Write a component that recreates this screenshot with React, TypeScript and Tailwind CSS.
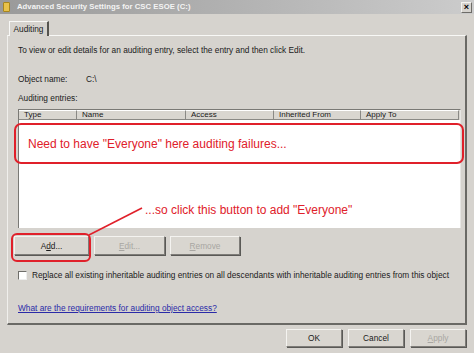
import React from "react";

const ui = { fontFamily: '"Liberation Sans", Arial, sans-serif' };

function Btn({ label, disabled, w, h = "h-[19px]" }: { label: React.ReactNode; disabled?: boolean; w: string; h?: string }) {
  return (
    <div
      className={`${w} ${h} flex items-center justify-center bg-[#d9d6d0] border border-t-[#f4f3f0] border-l-[#f4f3f0] border-r-[#7e7c78] border-b-[#7e7c78] shadow-[1px_1px_0_#5a5956] text-[8.3px] leading-[10px] ${disabled ? "text-[#a8a6a2]" : "text-[#1a1a1a]"}`}
    >
      {label}
    </div>
  );
}

export default function App() {
  return (
    <div className="relative w-[474px] h-[353px] bg-[#d6d3ce] overflow-hidden text-[#1a1a1a]" style={ui}>
      {/* title bar */}
      <div className="h-[14px] flex items-center bg-gradient-to-r from-[#9a9a9a] via-[#b2b2b2] to-[#cccccc]">
        <div className="ml-[3px] w-[7px] h-[10px] bg-[#e8c24a] border border-[#a8861e] rounded-[1px]" />
        <div className="ml-[7px] text-[7.7px] leading-[10px] font-bold text-[#f4f4f4] tracking-[0.05px]">
          Advanced Security Settings for CSC ESOE (C:)
        </div>
        <div className="ml-auto mr-[2px] w-[11px] h-[11px] flex items-center justify-center bg-[#d6d3ce] border border-t-[#f4f3f0] border-l-[#f4f3f0] border-r-[#6e6c68] border-b-[#6e6c68] text-[9px] font-bold leading-none text-black">
          ×
        </div>
      </div>

      <div className="pl-[7px] pr-[7px] pt-[7px]">
        {/* tab */}
        <div className="flex">
          <div className="ml-[2px] w-[40px] h-[15px] flex items-center justify-center text-[8.3px] leading-[10px] bg-[#d6d3ce] border-l border-t border-[#f8f8f6] border-r-2 border-r-[#55544f] relative z-10 -mb-px">
            Auditing
          </div>
        </div>

        {/* panel */}
        <div className="h-[290px] w-[460px] border-t border-l border-t-[#f8f8f6] border-l-[#f0efec] border-r-2 border-r-[#6a6965] border-b-2 border-b-[#6a6965] pl-[10px] pr-[6px] relative text-[8.3px] leading-[10px]">
          <div className="mt-[9px]">
            To view or edit details for an auditing entry, select the entry and then click Edit.
          </div>
          <div className="mt-[19px] flex">
            <span className="w-[68px]">Object name:</span>
            <span>C:\</span>
          </div>
          <div className="mt-[9px]">Auditing entries:</div>

          {/* list */}
          <div className="mt-[6px] w-[443px] border-l border-t border-[#7a7975] border-r border-r-[#e8e7e4] bg-white">
            <div className="h-[10px] flex text-[8px] bg-[#d9d6d0] leading-none">
              {[
                ["Type", "w-[58px]"],
                ["Name", "w-[109px]"],
                ["Access", "w-[88px]"],
                ["Inherited From", "w-[87px]"],
                ["Apply To", "w-[98px]"],
              ].map(([t, w]) => (
                <div key={t} className={`${w} flex items-center pl-[5px] border-r border-r-[#8a8985] border-b border-b-[#8a8985] border-t border-t-white`}>
                  {t}
                </div>
              ))}
            </div>
            <div className="h-[108px]" />
          </div>

          {/* buttons */}
          <div className="mt-[8px] -ml-[4px] flex gap-[5px]">
            <Btn w="w-[75px]" label={<span>A<u>d</u>d...</span>} />
            <Btn w="w-[71px]" disabled label={<span><u>E</u>dit...</span>} />
            <Btn w="w-[70px]" disabled label={<span><u>R</u>emove</span>} />
          </div>

          {/* checkbox */}
          <div className="mt-[15px] flex items-center whitespace-nowrap">
            <div className="w-[9px] h-[9px] shrink-0 bg-white border border-t-[#6f6e6a] border-l-[#6f6e6a] border-r-[#eeeeee] border-b-[#eeeeee]" />
            <span className="ml-[5px]">
              Re<u>p</u>lace all existing inheritable auditing entries on all descendants with inheritable auditing entries from this object
            </span>
          </div>

          <div className="mt-[23px] text-[#2a2aa8] underline">
            What are the requirements for auditing object access?
          </div>
        </div>

        {/* bottom buttons */}
        <div className="mt-[4px] flex justify-end gap-[6px] pr-[1px]">
          <Btn w="w-[56px]" h="h-[18px]" label="OK" />
          <Btn w="w-[56px]" h="h-[18px]" label="Cancel" />
          <Btn w="w-[56px]" h="h-[18px]" disabled label={<span><u>A</u>pply</span>} />
        </div>
      </div>

      {/* annotations */}
      <div className="absolute left-[14px] top-[123px] w-[450px] h-[41px] border-2 border-[#e0202a] rounded-[7px] flex items-center pl-[12px] text-[12px] leading-[14px] text-[#e0202a]">
        Need to have "Everyone" here auditing failures...
      </div>
      <div className="absolute left-[145px] top-[203px] text-[12px] leading-[14px] text-[#e0202a]">
        ...so click this button to add "Everyone"
      </div>
      <div className="absolute left-[11px] top-[233px] w-[80px] h-[29px] border-2 border-[#e0202a] rounded-[6px]" />
      <svg className="absolute left-0 top-0" width="474" height="353">
        <line x1="89" y1="235" x2="142" y2="208" stroke="#e0202a" strokeWidth="1.6" />
      </svg>
    </div>
  );
}
